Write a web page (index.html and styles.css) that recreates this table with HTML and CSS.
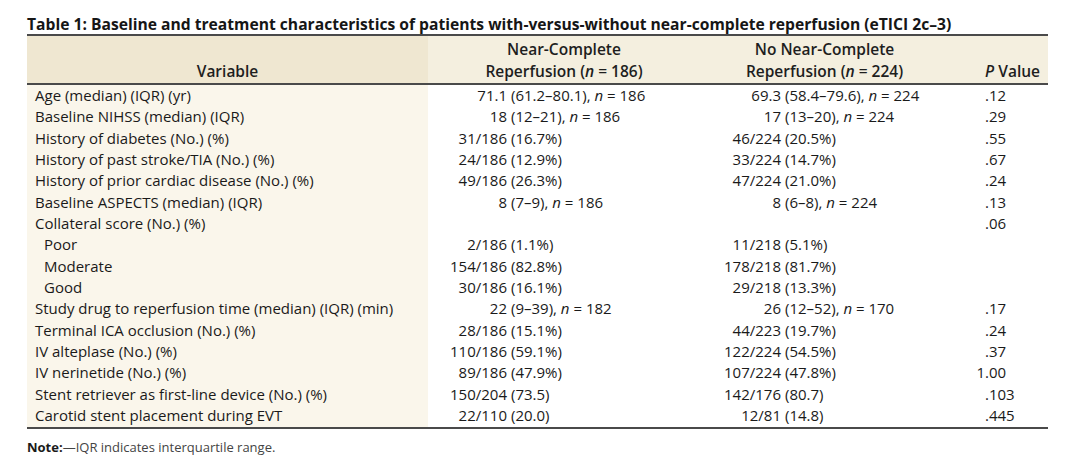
FILE: index.html
```html
<!DOCTYPE html>
<html>
<head>
<meta charset="utf-8">
<link rel="stylesheet" href="styles.css">
</head>
<body>
<div class="page">
  <div class="title">Table 1: Baseline and treatment characteristics of patients with-versus-without near-complete reperfusion (eTICI 2c–3)</div>
  <div class="table">
    <div class="row head">
      <div class="c1 hvar"><div>Variable</div></div>
      <div class="c2 hc"><div>Near-Complete<br>Reperfusion (<i>n</i> = 186)</div></div>
      <div class="c3 hc"><div>No Near-Complete<br>Reperfusion (<i>n</i> = 224)</div></div>
      <div class="c4 hp"><div><i>P</i> Value</div></div>
    </div>
    <div class="body">
      <div class="row"><div class="c1">Age (median) (IQR) (yr)</div><div class="c2 al"><span class="pre">71.1</span><span class="post">(61.2–80.1), <i>n</i> = 186</span></div><div class="c3 al"><span class="pre">69.3</span><span class="post">(58.4–79.6), <i>n</i> = 224</span></div><div class="c4 al"><span class="pre"></span><span class="post">.12</span></div></div>
      <div class="row"><div class="c1">Baseline NIHSS (median) (IQR)</div><div class="c2 al"><span class="pre">18</span><span class="post">(12–21), <i>n</i> = 186</span></div><div class="c3 al"><span class="pre">17</span><span class="post">(13–20), <i>n</i> = 224</span></div><div class="c4 al"><span class="pre"></span><span class="post">.29</span></div></div>
      <div class="row"><div class="c1">History of diabetes (No.) (%)</div><div class="c2 al"><span class="pre">31/186</span><span class="post">(16.7%)</span></div><div class="c3 al"><span class="pre">46/224</span><span class="post">(20.5%)</span></div><div class="c4 al"><span class="pre"></span><span class="post">.55</span></div></div>
      <div class="row"><div class="c1">History of past stroke/TIA (No.) (%)</div><div class="c2 al"><span class="pre">24/186</span><span class="post">(12.9%)</span></div><div class="c3 al"><span class="pre">33/224</span><span class="post">(14.7%)</span></div><div class="c4 al"><span class="pre"></span><span class="post">.67</span></div></div>
      <div class="row"><div class="c1">History of prior cardiac disease (No.) (%)</div><div class="c2 al"><span class="pre">49/186</span><span class="post">(26.3%)</span></div><div class="c3 al"><span class="pre">47/224</span><span class="post">(21.0%)</span></div><div class="c4 al"><span class="pre"></span><span class="post">.24</span></div></div>
      <div class="row"><div class="c1">Baseline ASPECTS (median) (IQR)</div><div class="c2 al"><span class="pre">8</span><span class="post">(7–9), <i>n</i> = 186</span></div><div class="c3 al"><span class="pre">8</span><span class="post">(6–8), <i>n</i> = 224</span></div><div class="c4 al"><span class="pre"></span><span class="post">.13</span></div></div>
      <div class="row"><div class="c1">Collateral score (No.) (%)</div><div class="c2"></div><div class="c3"></div><div class="c4 al"><span class="pre"></span><span class="post">.06</span></div></div>
      <div class="row"><div class="c1 sub">Poor</div><div class="c2 al"><span class="pre">2/186</span><span class="post">(1.1%)</span></div><div class="c3 al"><span class="pre">11/218</span><span class="post">(5.1%)</span></div><div class="c4"></div></div>
      <div class="row"><div class="c1 sub">Moderate</div><div class="c2 al"><span class="pre">154/186</span><span class="post">(82.8%)</span></div><div class="c3 al"><span class="pre">178/218</span><span class="post">(81.7%)</span></div><div class="c4"></div></div>
      <div class="row"><div class="c1 sub">Good</div><div class="c2 al"><span class="pre">30/186</span><span class="post">(16.1%)</span></div><div class="c3 al"><span class="pre">29/218</span><span class="post">(13.3%)</span></div><div class="c4"></div></div>
      <div class="row"><div class="c1">Study drug to reperfusion time (median) (IQR) (min)</div><div class="c2 al"><span class="pre">22</span><span class="post">(9–39), <i>n</i> = 182</span></div><div class="c3 al"><span class="pre">26</span><span class="post">(12–52), <i>n</i> = 170</span></div><div class="c4 al"><span class="pre"></span><span class="post">.17</span></div></div>
      <div class="row"><div class="c1">Terminal ICA occlusion (No.) (%)</div><div class="c2 al"><span class="pre">28/186</span><span class="post">(15.1%)</span></div><div class="c3 al"><span class="pre">44/223</span><span class="post">(19.7%)</span></div><div class="c4 al"><span class="pre"></span><span class="post">.24</span></div></div>
      <div class="row"><div class="c1">IV alteplase (No.) (%)</div><div class="c2 al"><span class="pre">110/186</span><span class="post">(59.1%)</span></div><div class="c3 al"><span class="pre">122/224</span><span class="post">(54.5%)</span></div><div class="c4 al"><span class="pre"></span><span class="post">.37</span></div></div>
      <div class="row"><div class="c1">IV nerinetide (No.) (%)</div><div class="c2 al"><span class="pre">89/186</span><span class="post">(47.9%)</span></div><div class="c3 al"><span class="pre">107/224</span><span class="post">(47.8%)</span></div><div class="c4 al"><span class="pre">1</span><span class="post">.00</span></div></div>
      <div class="row"><div class="c1">Stent retriever as first-line device (No.) (%)</div><div class="c2 al"><span class="pre">150/204</span><span class="post">(73.5)</span></div><div class="c3 al"><span class="pre">142/176</span><span class="post">(80.7)</span></div><div class="c4 al"><span class="pre"></span><span class="post">.103</span></div></div>
      <div class="row"><div class="c1">Carotid stent placement during EVT</div><div class="c2 al"><span class="pre">22/110</span><span class="post">(20.0)</span></div><div class="c3 al"><span class="pre">12/81</span><span class="post">(14.8)</span></div><div class="c4 al"><span class="pre"></span><span class="post">.445</span></div></div>
    </div>
  </div>
  <div class="note"><b>Note:</b>—IQR indicates interquartile range.</div>
</div>
</body>
</html>
```
FILE: styles.css
```css
html, body {
  margin: 0;
  padding: 0;
  background: #ffffff;
}
body {
  font-family: "Open Sans", Lato, "DejaVu Sans", sans-serif;
  color: #1a1a1a;
}
.page {
  padding: 14px 0 0 27px;
  width: 1021px;
}
.title {
  font-weight: 700;
  font-size: 15.65px;
  line-height: 20px;
  color: #161616;
  white-space: nowrap;
  padding-bottom: 0;
  border-bottom: 2px solid #4a4a4a;
}
.table {
  border-bottom: 2px solid #4a4a4a;
}
.row {
  display: grid;
  grid-template-columns: 401px 272px 245px 103px;
  font-size: 15px;
  height: 21.35px;
  line-height: 21.35px;
}
.row.head {
  height: 47px;
  line-height: 22px;
  background: #f4efdf;
  border-bottom: 2px solid #4a4a4a;
  font-weight: 600;
  font-size: 15.5px;
  color: #1e1e1e;
}
.head > div {
  display: flex;
  flex-direction: column;
  justify-content: flex-end;
  padding-bottom: 1px;
}
.head .c1 {
  background: #efe7d1;
}
.hvar {
  text-align: center;
}
.hc {
  text-align: center;
}
.c3.hc {
  padding-left: 4px;
}
.hp {
  text-align: right;
  padding-right: 8px;
}
.body .c1 {
  background: #faf6eb;
  padding-left: 8px;
  white-space: nowrap;
}
.body .c1.sub {
  padding-left: 17px;
}
.al {
  display: flex;
  white-space: nowrap;
}
.c2 .pre {
  width: 79px;
  text-align: right;
}
.c3 .pre {
  width: 81px;
  text-align: right;
}
.c4 .pre {
  width: 40px;
  text-align: right;
}
.c2 .post, .c3 .post {
  margin-left: 4px;
}
.note {
  font-size: 13px;
  color: #444;
  margin-top: 9px;
  line-height: 18px;
}
.note b {
  color: #1a1a1a;
}
```
